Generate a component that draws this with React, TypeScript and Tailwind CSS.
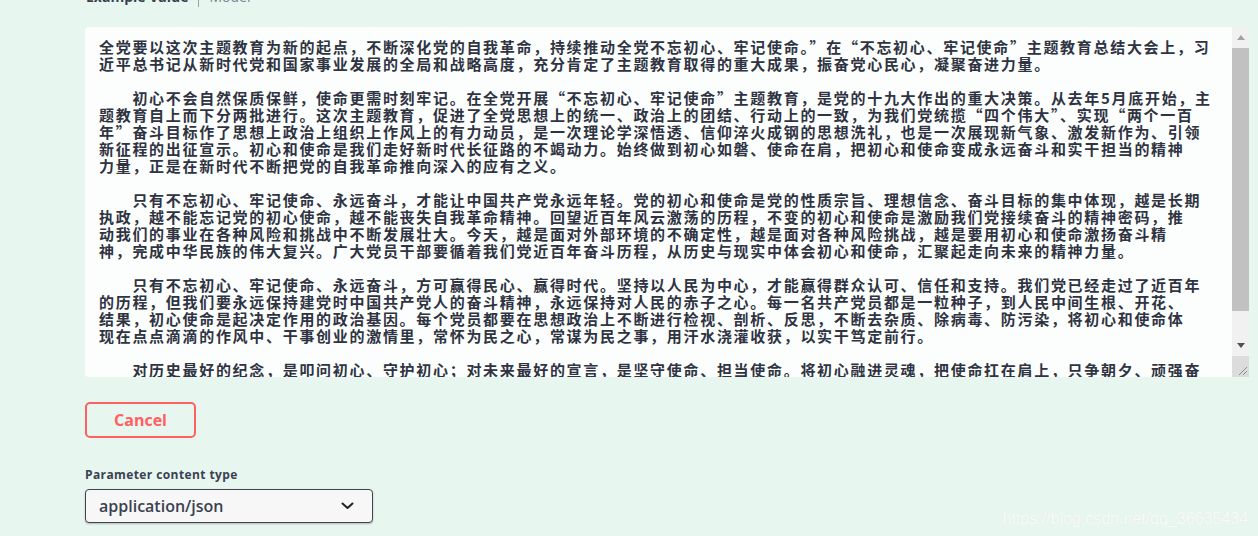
import React from "react";

const lines: string[] = [
  "全党要以这次主题教育为新的起点，不断深化党的自我革命，持续推动全党不忘初心、牢记使命。”在“不忘初心、牢记使命”主题教育总结大会上，习",
  "近平总书记从新时代党和国家事业发展的全局和战略高度，充分肯定了主题教育取得的重大成果，振奋党心民心，凝聚奋进力量。",
  "",
  "\u3000\u3000初心不会自然保质保鲜，使命更需时刻牢记。在全党开展“不忘初心、牢记使命”主题教育，是党的十九大作出的重大决策。从去年5月底开始，主",
  "题教育自上而下分两批进行。这次主题教育，促进了全党思想上的统一、政治上的团结、行动上的一致，为我们党统揽“四个伟大”、实现“两个一百",
  "年”奋斗目标作了思想上政治上组织上作风上的有力动员，是一次理论学深悟透、信仰淬火成钢的思想洗礼，也是一次展现新气象、激发新作为、引领",
  "新征程的出征宣示。初心和使命是我们走好新时代长征路的不竭动力。始终做到初心如磐、使命在肩，把初心和使命变成永远奋斗和实干担当的精神",
  "力量，正是在新时代不断把党的自我革命推向深入的应有之义。",
  "",
  "\u3000\u3000只有不忘初心、牢记使命、永远奋斗，才能让中国共产党永远年轻。党的初心和使命是党的性质宗旨、理想信念、奋斗目标的集中体现，越是长期",
  "执政，越不能忘记党的初心使命，越不能丧失自我革命精神。回望近百年风云激荡的历程，不变的初心和使命是激励我们党接续奋斗的精神密码，推",
  "动我们的事业在各种风险和挑战中不断发展壮大。今天，越是面对外部环境的不确定性，越是面对各种风险挑战，越是要用初心和使命激扬奋斗精",
  "神，完成中华民族的伟大复兴。广大党员干部要循着我们党近百年奋斗历程，从历史与现实中体会初心和使命，汇聚起走向未来的精神力量。",
  "",
  "\u3000\u3000只有不忘初心、牢记使命、永远奋斗，方可赢得民心、赢得时代。坚持以人民为中心，才能赢得群众认可、信任和支持。我们党已经走过了近百年",
  "的历程，但我们要永远保持建党时中国共产党人的奋斗精神，永远保持对人民的赤子之心。每一名共产党员都是一粒种子，到人民中间生根、开花、",
  "结果，初心使命是起决定作用的政治基因。每个党员都要在思想政治上不断进行检视、剖析、反思，不断去杂质、除病毒、防污染，将初心和使命体",
  "现在点点滴滴的作风中、干事创业的激情里，常怀为民之心，常谋为民之事，用汗水浇灌收获，以实干笃定前行。",
  "",
  "\u3000\u3000对历史最好的纪念，是叩问初心、守护初心；对未来最好的宣言，是坚守使命、担当使命。将初心融进灵魂，把使命扛在肩上，只争朝夕、顽强奋",
  "斗，我们就一定能够在新时代创造新的更大奇迹，不断夺取新时代中国特色社会主义伟大胜利。",
];

const content = lines.join("\n");

export default function App() {
  return (
    <div className="relative h-[536px] w-full overflow-hidden bg-[#e8f6f0] font-['Open_Sans','Noto_Sans',sans-serif] text-[#3b4151]">
      <div className="flex flex-col pl-[85px] pr-[9px]">
        {/* tabs: Example Value | Model (cut off at top) */}
        <div className="-mt-[13px] flex h-[20px] items-center text-[14px] leading-[20px]">
          <span className="pl-[1px] font-bold text-[#3b4151]">Example Value</span>
          <span className="mx-[10px] h-[20px] w-px bg-[#a0a0a0]" />
          <span className="text-[#7d8492]">Model</span>
        </div>

        {/* textarea with classic scrollbar */}
        <div className="mt-[20px] flex h-[350px] w-[1164px] overflow-hidden rounded-l-[4px]">
          <textarea
            readOnly
            wrap="off"
            value={content}
            className="h-full flex-1 resize-none overflow-hidden whitespace-pre border-0 bg-[#fbfefc] pb-[10px] pl-[14px] pr-[4px] pt-[11px] font-['Noto_Sans_CJK_SC',sans-serif] text-[15px] font-semibold leading-[17px] tracking-[1.7px] text-[#2f3342] outline-none"
          />
          <div className="flex w-[17px] flex-col bg-[#f1f1f1]">
            <div className="flex h-[21px] items-center justify-center">
              <svg width="8" height="5" viewBox="0 0 8 5">
                <path d="M0 5 L4 0 L8 5 Z" fill="#a3a3a3" />
              </svg>
            </div>
            <div className="flex flex-1 flex-col">
              <div className="h-[263px] w-full bg-[#c1c1c1]" />
            </div>
            <div className="flex h-[22px] items-center justify-center">
              <svg width="8" height="5" viewBox="0 0 8 5">
                <path d="M0 0 L8 0 L4 5 Z" fill="#505050" />
              </svg>
            </div>
            <div className="relative h-[21px] bg-[#dcdcdc]">
              <svg className="absolute bottom-[2px] right-[2px]" width="9" height="9" viewBox="0 0 9 9">
                <path d="M9 1 L1 9 M9 5 L5 9" stroke="#8a8a8a" strokeWidth="1" />
              </svg>
            </div>
          </div>
        </div>

        <button className="mt-[25px] flex h-[36px] w-[111px] items-center justify-center rounded-[5px] border-2 border-[#ff6060] bg-transparent text-[16px] font-bold text-[#ff6060]">
          Cancel
        </button>

        <div className="mt-[29px] text-[12px] font-bold leading-[16px] tracking-[0.4px] text-[#3b4151]">
          Parameter content type
        </div>

        <div className="mt-[6px] flex h-[34px] w-[288px] items-center justify-between rounded-[4px] border border-[#41444e] bg-[#f7f7f7] pl-[13px] pr-[18px] shadow-[0_1px_2px_rgba(0,0,0,0.25)]">
          <span className="text-[16px] font-semibold text-[#3b4151]">application/json</span>
          <svg width="13" height="8" viewBox="0 0 13 8" fill="none">
            <path d="M1.5 1.5 L6.5 6 L11.5 1.5" stroke="#222" strokeWidth="2" strokeLinecap="round" strokeLinejoin="round" />
          </svg>
        </div>
      </div>

      {/* watermark */}
      <div className="absolute bottom-[7px] right-[10px] font-['Liberation_Sans',Arial,sans-serif] text-[16px] leading-[20px] text-white/80 [text-shadow:0_0_1px_rgba(0,0,0,0.08)]">
        https://blog.csdn.net/qq_36635434
      </div>
    </div>
  );
}
